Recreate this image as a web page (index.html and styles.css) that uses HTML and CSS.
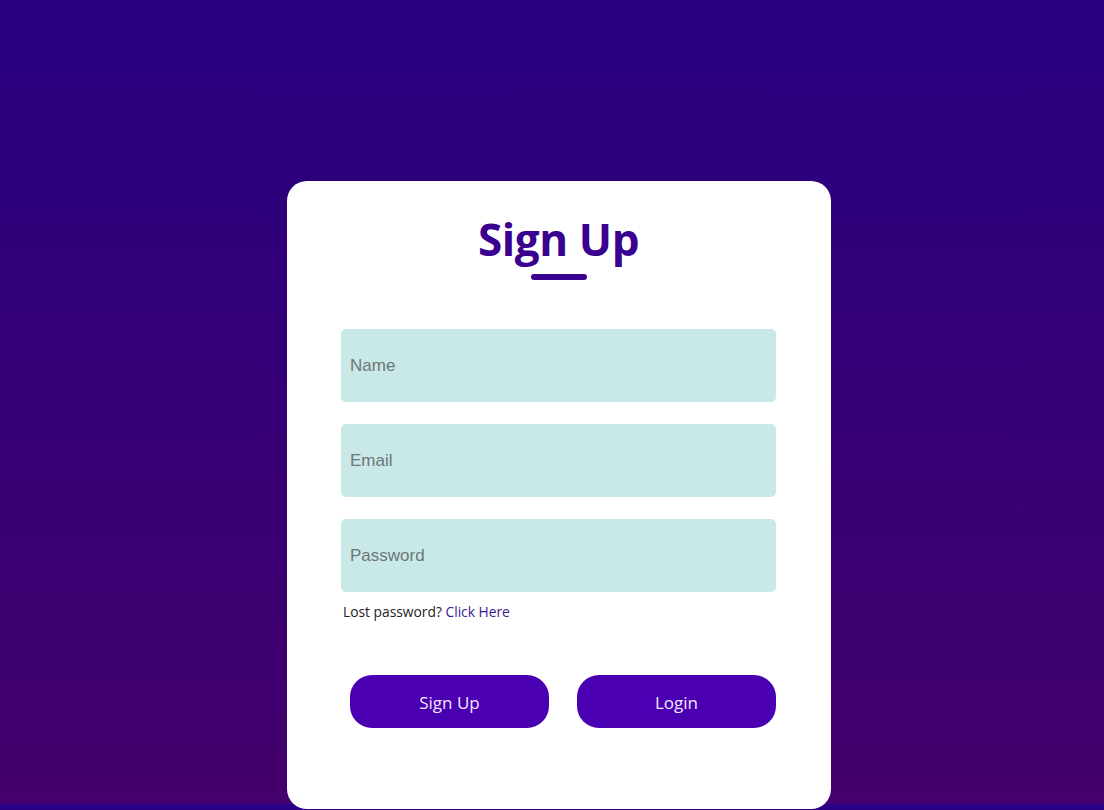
FILE: index.html
```html
<!DOCTYPE html>
<html lang="en">
<head>
<meta charset="utf-8">
<title>Sign Up</title>
<link rel="stylesheet" href="styles.css">
</head>
<body>
<div class="page">
  <div class="card">
    <h1 class="title">Sign Up</h1>
    <div class="bar"></div>
    <form class="form">
      <div class="fields">
        <input class="field" type="text" placeholder="Name">
        <input class="field" type="email" placeholder="Email">
        <input class="field" type="password" placeholder="Password">
      </div>
      <p class="lost">Lost password? <a href="#" class="link">Click Here</a></p>
      <div class="buttons">
        <button type="button" class="btn">Sign Up</button>
        <button type="button" class="btn">Login</button>
      </div>
    </form>
  </div>
</div>
</body>
</html>
```

FILE: styles.css
```css
* { box-sizing: border-box; }
html, body {
  margin: 0;
  padding: 0;
  background: #2a0086;
}
body {
  font-family: "Open Sans", "Noto Sans", sans-serif;
  height: 810px;
  overflow: hidden;
}
.page {
  height: 804px;
  background: linear-gradient(to bottom, #270080 0%, #44006c 100%);
  display: flex;
  justify-content: center;
  padding-top: 181px;
  padding-left: 14px;
}
.card {
  width: 544px;
  height: 628px;
  background: #fff;
  border-radius: 20px;
  padding: 28px 55px 0 54px;
  display: flex;
  flex-direction: column;
  align-items: stretch;
  flex-shrink: 0;
}
.title {
  margin: 0;
  text-align: center;
  font-size: 44px;
  font-weight: 700;
  line-height: 60px;
  color: #3a0090;
  letter-spacing: -0.4px;
}
.bar {
  width: 56px;
  height: 6px;
  border-radius: 3px;
  background: #3a0090;
  align-self: center;
  margin-top: 5px;
}
.form {
  margin-top: 49px;
}
.fields {
  display: flex;
  flex-direction: column;
  gap: 22px;
}
.field {
  width: 435px;
  height: 73px;
  border: none;
  outline: none;
  border-radius: 5px;
  background: #c9e9e9;
  padding: 1px 9px 0;
  font-family: "Liberation Sans", Arial, sans-serif;
  font-size: 17px;
  color: #333;
}
.field::placeholder {
  color: #6f7676;
}
.lost {
  margin: 10px 0 0 2px;
  font-size: 13.8px;
  color: #222;
  line-height: 20px;
}
.link {
  color: #3d1a8f;
  text-decoration: none;
}
.buttons {
  display: flex;
  gap: 28px;
  padding-left: 9px;
  margin-top: 53px;
}
.btn {
  width: 199px;
  height: 53px;
  border: none;
  border-radius: 22px;
  background: #4a00b2;
  color: #f3e6ff;
  font-family: "Open Sans", "Noto Sans", sans-serif;
  font-size: 17px;
  padding-top: 2px;
  cursor: pointer;
}
```
